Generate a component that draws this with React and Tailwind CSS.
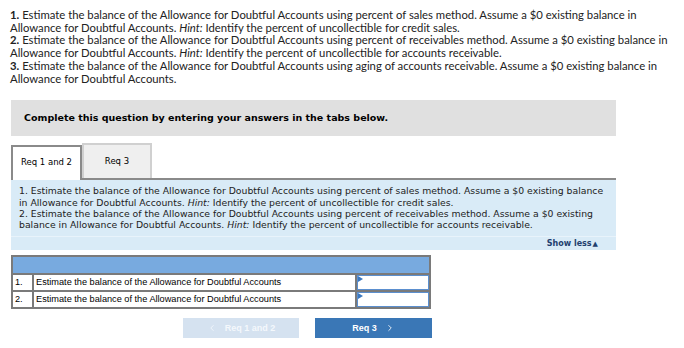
import { ChevronLeft, ChevronRight } from "lucide-react";

const rows = [
  { n: "1.", label: "Estimate the balance of the Allowance for Doubtful Accounts" },
  { n: "2.", label: "Estimate the balance of the Allowance for Doubtful Accounts" },
];

export default function App() {
  return (
    <div className="w-[684px] h-[348px] bg-white overflow-hidden text-black">
      {/* Question text */}
      <div className="pl-[10px] pr-[4px] pt-[9px] text-[11.3px] leading-[12.7px] text-[#222]" style={{ fontFamily: "Lato, 'Open Sans', sans-serif" }}>
        <p>
          <b>1.</b> Estimate the balance of the Allowance for Doubtful Accounts using percent of sales method. Assume a $0 existing balance in Allowance for Doubtful Accounts. <i>Hint:</i> Identify the percent of uncollectible for credit sales.
        </p>
        <p>
          <b>2.</b> Estimate the balance of the Allowance for Doubtful Accounts using percent of receivables method. Assume a $0 existing balance in Allowance for Doubtful Accounts. <i>Hint:</i> Identify the percent of uncollectible for accounts receivable.
        </p>
        <p>
          <b>3.</b> Estimate the balance of the Allowance for Doubtful Accounts using aging of accounts receivable. Assume a $0 existing balance in Allowance for Doubtful Accounts.
        </p>
      </div>

      <div className="ml-[11px] w-[605px] mt-[15px]" style={{ fontFamily: "'DejaVu Sans', Verdana, sans-serif" }}>
        {/* Instructions */}
        <div className="h-[36px] bg-[#e0e0e0] flex items-center pl-[13px] text-[9.5px] font-bold">
          Complete this question by entering your answers in the tabs below.
        </div>

        {/* Tabs */}
        <div className="flex mt-[7px] h-[35px] items-end">
          <div className="w-[71px] h-[35px] bg-white border-2 border-b-0 border-[#8a8a8a] flex items-center justify-center text-[8.5px] relative z-10 -mb-[2px] pb-[2px]">
            Req 1 and 2
          </div>
          <div className="w-[70px] h-[35px] bg-[#efefef] border-2 border-b-0 border-[#d0d0d0] flex items-center justify-center text-[8.5px]">
            Req 3
          </div>
        </div>

        {/* Panel */}
        <div className="border-t-2 border-[#8a8a8a] bg-[#d9ebf7]">
          <div className="px-[8px] pt-[5px] pb-[6px] text-[9.3px] leading-[11.3px] text-[#222]">
            <p>1. Estimate the balance of the Allowance for Doubtful Accounts using percent of sales method. Assume a $0 existing balance in Allowance for Doubtful Accounts. <i>Hint:</i> Identify the percent of uncollectible for credit sales.</p>
            <p>2. Estimate the balance of the Allowance for Doubtful Accounts using percent of receivables method. Assume a $0 existing balance in Allowance for Doubtful Accounts. <i>Hint:</i> Identify the percent of uncollectible for accounts receivable.</p>
          </div>
          <div className="border-t border-[#e8f3fb] h-[14px] flex items-center justify-end pr-[18px] text-[8px] font-bold text-[#1f3f6e]">
            Show less<span className="text-[7px] ml-[1px]">▲</span>
          </div>
        </div>
      </div>

      {/* Answer table */}
      <div className="ml-[11px] mt-[5px] w-[420px] border-2 border-[#7a7a7a] bg-[#7a7a7a]" style={{ fontFamily: "'Liberation Sans', Arial, sans-serif" }}>
        <div className="h-[16px] bg-[#78aadf]" />
        {rows.map((r) => (
          <div key={r.n} className="flex mt-[2px] h-[15px] text-[9.2px]">
            <div className="w-[19px] bg-white flex items-center pl-[2px]">{r.n}</div>
            <div className="w-[321px] ml-[2px] bg-white flex items-center pl-[2px]">{r.label}</div>
            <div className="flex-1 ml-[2px] bg-white border border-[#5b8fcf] relative">
              <span className="absolute left-0 top-0 w-0 h-0 border-t-[3px] border-b-[3px] border-l-[5px] border-t-transparent border-b-transparent border-l-[#3a78c0]" />
            </div>
          </div>
        ))}
      </div>

      {/* Navigation */}
      <div className="flex ml-[183px] mt-[9px] gap-[16px]" style={{ fontFamily: "'Liberation Sans', Arial, sans-serif" }}>
        <button className="w-[116px] h-[20px] bg-[#d5e2f0] text-[#f4f8fc] text-[9px] font-bold flex items-center justify-center gap-[8px]">
          <ChevronLeft size={10} strokeWidth={2} />
          Req 1 and 2
        </button>
        <button className="w-[117px] h-[20px] bg-[#3a77b6] text-white text-[9px] font-bold flex items-center justify-center gap-[8px]">
          Req 3
          <ChevronRight size={10} strokeWidth={2} />
        </button>
      </div>
    </div>
  );
}
